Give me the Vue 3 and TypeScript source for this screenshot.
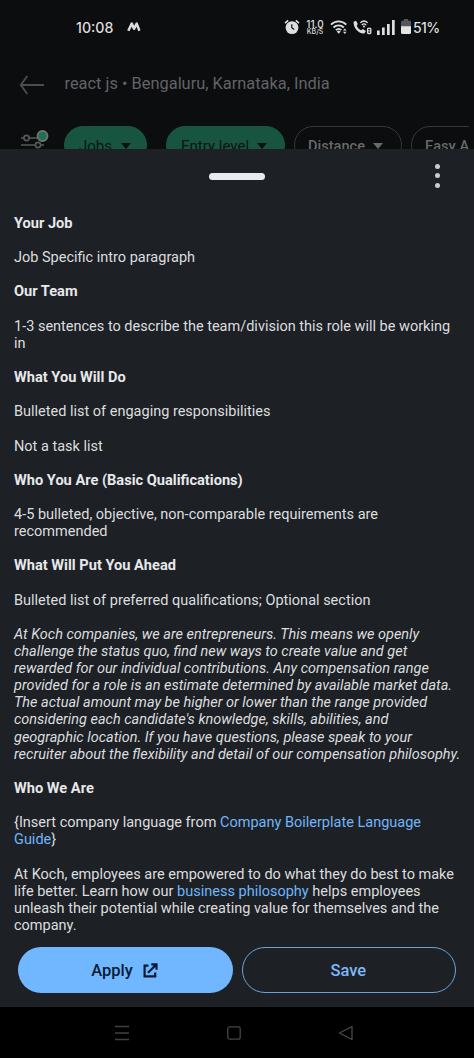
<script setup lang="ts">
interface Piece {
  text: string
  link?: boolean
}
interface Block {
  kind: 'heading' | 'body' | 'note'
  lines: Piece[][]
}

const heading = (text: string): Block => ({ kind: 'heading', lines: [[{ text }]] })
const body = (...lines: string[]): Block => ({ kind: 'body', lines: lines.map((text) => [{ text }]) })

const blocks: Block[] = [
  heading('Your Job'),
  body('Job Specific intro paragraph'),
  heading('Our Team'),
  body('1-3 sentences to describe the team/division this role will be working', 'in'),
  heading('What You Will Do'),
  body('Bulleted list of engaging responsibilities'),
  body('Not a task list'),
  heading('Who You Are (Basic Qualifications)'),
  body('4-5 bulleted, objective, non-comparable requirements are', 'recommended'),
  heading('What Will Put You Ahead'),
  body('Bulleted list of preferred qualifications; Optional section'),
  {
    kind: 'note',
    lines: [
      'At Koch companies, we are entrepreneurs. This means we openly',
      'challenge the status quo, find new ways to create value and get',
      'rewarded for our individual contributions. Any compensation range',
      'provided for a role is an estimate determined by available market data.',
      'The actual amount may be higher or lower than the range provided',
      "considering each candidate's knowledge, skills, abilities, and",
      'geographic location. If you have questions, please speak to your',
      'recruiter about the flexibility and detail of our compensation philosophy.',
    ].map((text) => [{ text }]),
  },
  heading('Who We Are'),
  {
    kind: 'body',
    lines: [
      [{ text: '{Insert company language from ' }, { text: 'Company Boilerplate Language', link: true }],
      [{ text: 'Guide', link: true }, { text: '}' }],
    ],
  },
  {
    kind: 'body',
    lines: [
      [{ text: 'At Koch, employees are empowered to do what they do best to make' }],
      [{ text: 'life better. Learn how our ' }, { text: 'business philosophy', link: true }, { text: ' helps employees' }],
      [{ text: 'unleash their potential while creating value for themselves and the' }],
      [{ text: 'company.' }],
    ],
  },
]
</script>

<template>
  <div class="screen">
    <header class="status">
      <span class="clock">10:08</span>
      <svg class="brand" width="14" height="10" viewBox="0 0 14 10">
        <path d="M1.3 8.8 4.8 1.6 7 6.8 9.7 1.6 12.4 8.8" fill="none" stroke="#dcdcdc" stroke-width="2.5" stroke-linejoin="round" />
      </svg>
      <svg class="alarm" width="16" height="16" viewBox="0 0 16 16">
        <circle cx="8" cy="8.6" r="6.4" fill="#dedede" />
        <path d="M1 4.2 4.2 1.4M15 4.2 11.8 1.4" stroke="#dedede" stroke-width="1.6" />
        <path d="M7.8 5.2v3.6l2.4 1.8" fill="none" stroke="#0c0d0f" stroke-width="1.2" />
      </svg>
      <div class="rate"><span>11.0</span><small>KB/S</small></div>
      <svg class="wifi" width="18" height="16" viewBox="0 0 18 16">
        <g fill="none" stroke="#dedede" stroke-width="1.9">
          <path d="M1 5.7C5.2 1.3 12 1.3 16.3 5.7" />
          <path d="M3.5 8.5c3-2.9 7.3-2.9 10.3 0" />
          <path d="M5.9 11.1c1.7-1.5 3.8-1.5 5.4 0" />
        </g>
        <path d="m6.7 12.5 2-1 2 1-2 2.2zM13 11.6 14.8 9.4l1.8 2.2zM13 12.7h3.6l-1.8 2.2z" fill="#dedede" />
      </svg>
      <svg class="call" width="19" height="16" viewBox="0 0 19 16">
        <path d="M.6 2.8 3 1.7 4.8 5 3.7 6.8c1 2.2 2.3 3.5 4.5 4.5L9.9 10l3 2-1.6 2.5C6 15.2 0 8.7.6 2.8z" fill="#dedede" />
        <g fill="none" stroke="#dedede" stroke-width="1.3">
          <path d="M7.3 3.9c2.2-2.2 5.2-2.2 7.4 0M8.8 5.9c1.3-1.2 3.1-1.2 4.4 0" />
          <rect x="14.6" y="9.3" width="3.2" height="5.2" rx=".8" />
          <path d="M14.6 11.9h3.2" stroke-width="1" />
        </g>
        <circle cx="11" cy="7.4" r="1" fill="#dedede" />
      </svg>
      <svg class="signal" width="18" height="15" viewBox="0 0 18 15">
        <path d="M0 10.5h2.7V15H0zM5 7.5h2.7V15H5zM10 4h2.7v11H10zM15 0h2.7v15H15z" fill="#dedede" />
      </svg>
      <svg class="battery" width="10" height="16" viewBox="0 0 10 16">
        <path d="M3 0h4v1.5h1.5Q10 1.5 10 3V8H0V3q0-1.5 1.5-1.5H3z" fill="#56575a" />
        <path d="M0 7.2h10v6.3q0 1.5-1.5 1.5h-7Q0 15 0 13.5z" fill="#e4e4e4" />
      </svg>
      <span class="percent">51%</span>
    </header>

    <div class="search">
      <svg width="26" height="20" viewBox="0 0 26 20">
        <path d="M25 10H2M8.3 1 1.8 10 8.3 19" fill="none" stroke="#4b4c4d" stroke-width="1.9" />
      </svg>
      <span>react js • Bengaluru, Karnataka, India</span>
    </div>

    <div class="filters">
      <svg class="tune" width="30" height="22" viewBox="0 0 30 22">
        <g fill="none" stroke="#56585a" stroke-width="1.7">
          <path d="M0 8h3M8 8h10M0 15h14M19.500 15H23" />
          <circle cx="5.5" cy="8" r="2.6" />
          <circle cx="17" cy="15" r="2.6" />
        </g>
        <circle cx="21.5" cy="6" r="5" fill="#1b7150" stroke="#727476" stroke-width="1.8" />
      </svg>
      <div class="chip on jobs">Jobs<i></i></div>
      <div class="rule"></div>
      <div class="chip on level">Entry level<i></i></div>
      <div class="chip distance">Distance<i></i></div>
      <div class="chip easy">Easy A</div>
    </div>

    <main class="sheet">
      <div class="top">
        <div class="handle"></div>
        <div class="more"><b></b><b></b><b></b></div>
      </div>
      <article>
        <p v-for="(block, i) in blocks" :key="i" :class="block.kind">
          <span v-for="(line, j) in block.lines" :key="j" class="line"><span v-for="(piece, k) in line" :key="k" :class="{ link: piece.link }">{{ piece.text }}</span></span>
        </p>
      </article>
      <div class="actions">
        <button class="apply">
          Apply
          <svg width="15" height="15" viewBox="0 0 15 15">
            <path d="M5.500 2.700H1.600v10.700h10.600V9.500M5 9.800 12.800 2M8.300 1.300h5.200v5.400" fill="none" stroke="#071b36" stroke-width="2.2" />
          </svg>
        </button>
        <button class="save">Save</button>
      </div>
    </main>

    <nav class="system">
      <svg width="16" height="16" viewBox="0 0 16 16"><path d="M1 1.500h14M1 8h14M1 14.500h14" stroke="#414141" stroke-width="1.3" /></svg>
      <svg width="16" height="16" viewBox="0 0 16 16"><rect x="1.800" y="1.800" width="12.400" height="12.400" rx="2" fill="none" stroke="#454545" stroke-width="1.3" /></svg>
      <svg width="16" height="16" viewBox="0 0 16 16"><path d="M14 1.500v13L1.500 8z" fill="none" stroke="#4b4b4b" stroke-width="1.3" stroke-linejoin="round" /></svg>
    </nav>
  </div>
</template>

<style>
body {
  margin: 0;
  background: #000;
}
</style>

<style scoped>
.screen {
  width: 474px;
  height: 1058px;
  overflow: hidden;
  display: flex;
  flex-direction: column;
  background: #0c0d0f;
  color: #dcdddf;
  font-family: Roboto, "Liberation Sans", sans-serif;
}
svg {
  display: block;
  flex: none;
}
.status {
  height: 54px;
  flex: none;
  display: flex;
  align-items: center;
  box-sizing: border-box;
  padding-left: 76px;
  white-space: nowrap;
  color: #dedede;
}
.clock {
  width: 51px;
  padding-top: 1px;
  font: 500 14.2px/16px Inter, sans-serif;
}
.brand {
  margin-right: 143px;
}
.alarm {
  margin-right: 5px;
}
.rate {
  width: 20px;
  display: flex;
  flex-direction: column;
  align-items: center;
  font: 500 10px/10px Inter, sans-serif;
}
.rate span {
  line-height: 9px;
}
.rate small {
  font-size: 7px;
  line-height: 6px;
}
.wifi {
  margin-left: 5px;
}
.call {
  margin-left: 5px;
}
.signal {
  margin-left: 5px;
}
.battery {
  margin-left: 6px;
}
.percent {
  margin-left: 2px;
  padding-top: 1px;
  font: 500 14px/16px Inter, sans-serif;
  letter-spacing: -0.6px;
}
.search {
  height: 60px;
  flex: none;
  display: flex;
  align-items: center;
  padding-left: 19px;
  gap: 19.500px;
  color: #626365;
  font-size: 16.4px;
  white-space: nowrap;
}
.search span {
  padding-bottom: 2px;
}
.search svg {
  margin-top: 1px;
}
.filters {
  width: 469px;
  height: 35px;
  flex: none;
  overflow: hidden;
  display: flex;
  align-items: flex-start;
  box-sizing: border-box;
  padding-top: 12px;
}
.tune {
  margin: 4px 0 0 21px;
  width: 30px;
}
.chip {
  height: 38px;
  flex: none;
  box-sizing: border-box;
  border: 1px solid #36383a;
  border-radius: 19px;
  display: flex;
  align-items: center;
  padding-top: 2px;
  color: #68696b;
  font-size: 14.6px;
  font-weight: 500;
  white-space: nowrap;
}
.chip i {
  border: 5.5px solid transparent;
  border-top: 6px solid #68696b;
  border-bottom: 0;
}
.on {
  background: #185540;
  border-color: #185540;
  color: #0a1412;
  font-weight: 400;
  font-size: 15px;
}
.on i {
  border-top-color: #09100e;
}
.jobs {
  width: 83px;
  margin-left: 13px;
  padding-left: 14px;
  gap: 9px;
}
.rule {
  width: 1px;
  height: 35px;
  background: #17191b;
  margin: 0 9px 0 10px;
}
.level {
  width: 119px;
  padding-left: 14px;
  gap: 8px;
}
.distance {
  width: 108px;
  margin-left: 9px;
  padding-left: 13px;
  gap: 8px;
}
.easy {
  width: 120px;
  margin-left: 9px;
  padding-left: 13px;
}
.sheet {
  height: 858px;
  flex: none;
  display: flex;
  flex-direction: column;
  background: #1d2126;
}
.top {
  height: 66px;
  flex: none;
  display: grid;
  grid-template-columns: 209px 56px 169px 6px;
}
.handle {
  grid-column: 2;
  height: 7px;
  margin-top: 24px;
  border-radius: 4px;
  background: #e7ebed;
}
.more {
  grid-column: 4;
  display: flex;
  flex-direction: column;
  gap: 4.3px;
  padding: 15px 0 0 0.500px;
}
.more b {
  width: 5px;
  height: 5px;
  border-radius: 50%;
  background: #c9ccd0;
}
article {
  height: 732px;
  flex: none;
  padding-left: 14px;
  font-size: 14.5px;
  line-height: 17.12px;
}
p {
  margin: 0 0 17.12px;
}
.line {
  display: block;
  white-space: pre;
}
.heading {
  font-size: 14.6px;
  font-weight: 700;
  color: #e7e8ea;
}
.note {
  font-size: 14.47px;
  font-style: italic;
}
.link {
  color: #70b5f9;
}
.actions {
  display: flex;
  gap: 9px;
  padding-left: 18px;
}
button {
  width: 214.5px;
  height: 46px;
  box-sizing: border-box;
  border: 0;
  border-radius: 23px;
  display: flex;
  align-items: center;
  justify-content: center;
  font: 500 16.5px/20px Roboto, sans-serif;
  padding: 2px 1px 0 0;
}
.apply {
  gap: 10.500px;
  background: #71b7ff;
  color: #071b36;
}
.apply svg {
  margin-bottom: 2px;
}
.save {
  background: transparent;
  border: 1.5px solid #6aa2d8;
  color: #7dbaf8;
}
.system {
  height: 51px;
  flex: none;
  display: flex;
  align-items: center;
  background: #000;
  padding-left: 114px;
  gap: 96px;
}
</style>
